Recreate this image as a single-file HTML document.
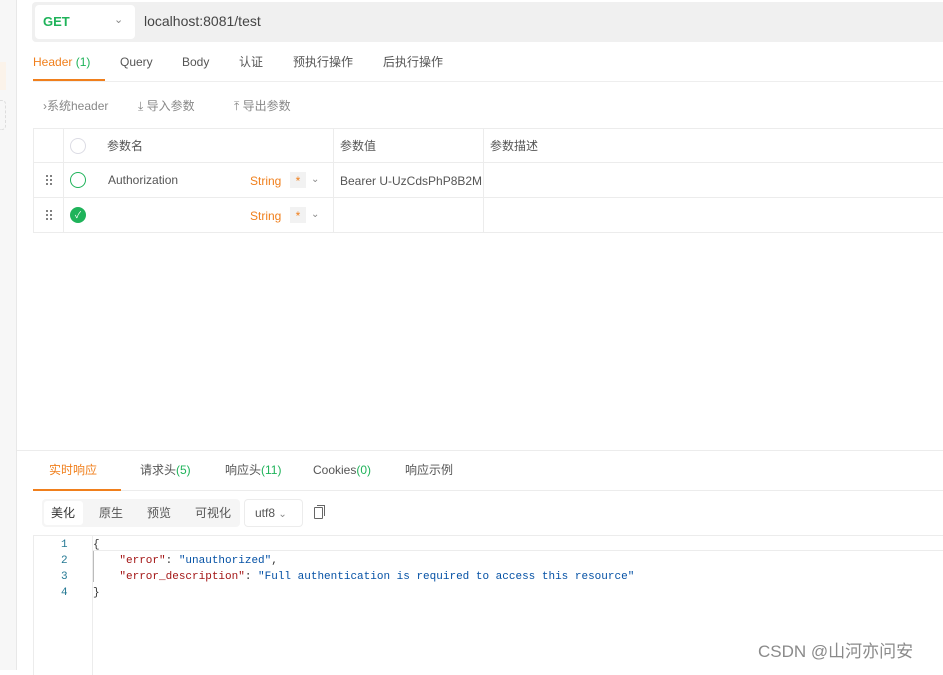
<!DOCTYPE html>
<html><head><meta charset="utf-8"><style>
*{box-sizing:border-box;margin:0;padding:0}
body{width:943px;height:670px;overflow:hidden;background:#fff;font-family:"Liberation Sans","Noto Sans CJK SC",sans-serif;font-size:12px;line-height:16px;color:#333;position:relative}
.abs{position:absolute}
.side{left:0;top:0;width:17px;height:670px;background:#f7f7f7;border-right:1px solid #e8e8e8}
.cn{white-space:nowrap}
.mono{font-family:"Liberation Mono","DejaVu Sans Mono",monospace;font-size:11px}
.dots{width:8px;height:12px;background-image:radial-gradient(circle,#777 1px,transparent 1.2px);background-size:4px 4px}
</style></head><body>
<div class="abs side"></div>
<div class="abs" style="left:0;top:62px;width:6px;height:28px;background:#fbf3ea"></div>
<div class="abs" style="left:0;top:100px;width:6px;height:30px;border:1px dashed #ddd;border-left:none;border-radius:0 4px 4px 0"></div>
<div class="abs" style="left:32px;top:2px;width:915px;height:40px;background:#f0f0f0;border-radius:4px"></div>
<div class="abs" style="left:35px;top:5px;width:100px;height:34px;background:#fff;border-radius:4px"></div>
<div class="abs" style="left:43px;top:14px;font-weight:bold;color:#1fb35a;font-size:13px">GET</div>
<div class="abs" style="left:114px;top:12px;color:#888;font-size:11px">&#8964;</div>
<div class="abs" style="left:144px;top:13px;color:#444;font-size:14px">localhost:8081/test</div>
<div class="abs cn" style="left:33px;top:54px;color:#f07f1c">Header <span style="color:#1fb35a">(1)</span></div>
<div class="abs cn" style="left:120px;top:54px;color:#555">Query</div>
<div class="abs cn" style="left:182px;top:54px;color:#555">Body</div>
<div class="abs cn" style="left:239px;top:54px;color:#555">认证</div>
<div class="abs cn" style="left:293px;top:54px;color:#555">预执行操作</div>
<div class="abs cn" style="left:383px;top:54px;color:#555">后执行操作</div>
<div class="abs" style="left:33px;top:81px;width:910px;height:1px;background:#eee"></div>
<div class="abs" style="left:33px;top:79px;width:72px;height:2px;background:#f07f1c"></div>
<div class="abs cn" style="left:43px;top:98px;color:#888">›系统header</div>
<div class="abs cn" style="left:138px;top:98px;color:#888">⤓ 导入参数</div>
<div class="abs cn" style="left:234px;top:98px;color:#888">⤒ 导出参数</div>
<div class="abs" style="left:33px;top:128px;width:912px;height:105px;border:1px solid #ececec"></div>
<div class="abs" style="left:33px;top:162px;width:912px;height:1px;background:#ececec"></div>
<div class="abs" style="left:33px;top:197px;width:912px;height:1px;background:#ececec"></div>
<div class="abs" style="left:63px;top:128px;width:1px;height:105px;background:#ececec"></div>
<div class="abs" style="left:333px;top:128px;width:1px;height:105px;background:#ececec"></div>
<div class="abs" style="left:483px;top:128px;width:1px;height:105px;background:#ececec"></div>
<div class="abs" style="left:70px;top:138px;width:16px;height:16px;border:1px solid #dcdce4;border-radius:50%"></div>
<div class="abs cn" style="left:107px;top:138px;color:#555">参数名</div>
<div class="abs cn" style="left:340px;top:138px;color:#555">参数值</div>
<div class="abs cn" style="left:490px;top:138px;color:#555">参数描述</div>
<div class="abs dots" style="left:45px;top:174px"></div>
<div class="abs" style="left:70px;top:172px;width:16px;height:16px;border:1px solid #1fb35a;border-radius:50%"></div>
<div class="abs cn" style="left:108px;top:172px;color:#555">Authorization</div>
<div class="abs cn" style="left:250px;top:173px;color:#f07f1c">String</div>
<div class="abs" style="left:290px;top:172px;width:16px;height:16px;background:#f2f2f2;color:#f07f1c;text-align:center;font-size:12px;line-height:18px">*</div>
<div class="abs" style="left:311px;top:172px;color:#888;font-size:10px">&#8964;</div>
<div class="abs cn" style="left:340px;top:173px;color:#555">Bearer U-UzCdsPhP8B2M</div>
<div class="abs dots" style="left:45px;top:209px"></div>
<div class="abs" style="left:70px;top:207px;width:16px;height:16px;background:#1fb35a;border-radius:50%;color:#fff;font-size:9px;text-align:center;line-height:16px">✓</div>
<div class="abs cn" style="left:250px;top:208px;color:#f07f1c">String</div>
<div class="abs" style="left:290px;top:207px;width:16px;height:16px;background:#f2f2f2;color:#f07f1c;text-align:center;font-size:12px;line-height:18px">*</div>
<div class="abs" style="left:311px;top:207px;color:#888;font-size:10px">&#8964;</div>
<div class="abs" style="left:17px;top:450px;width:926px;height:1px;background:#ececec"></div>
<div class="abs cn" style="left:49px;top:462px;color:#f07f1c">实时响应</div>
<div class="abs cn" style="left:140px;top:462px;color:#555">请求头<span style="color:#1fb35a">(5)</span></div>
<div class="abs cn" style="left:225px;top:462px;color:#555">响应头<span style="color:#1fb35a">(11)</span></div>
<div class="abs cn" style="left:313px;top:462px;color:#555">Cookies<span style="color:#1fb35a">(0)</span></div>
<div class="abs cn" style="left:405px;top:462px;color:#555">响应示例</div>
<div class="abs" style="left:33px;top:490px;width:910px;height:1px;background:#ececec"></div>
<div class="abs" style="left:33px;top:489px;width:88px;height:2px;background:#f07f1c"></div>
<div class="abs" style="left:42px;top:499px;width:198px;height:28px;background:#f5f5f5;border-radius:4px"></div>
<div class="abs" style="left:44px;top:501px;width:39px;height:24px;background:#fff;border-radius:3px"></div>
<div class="abs cn" style="left:51px;top:505px;color:#333">美化</div>
<div class="abs cn" style="left:99px;top:505px;color:#555">原生</div>
<div class="abs cn" style="left:147px;top:505px;color:#555">预览</div>
<div class="abs cn" style="left:195px;top:505px;color:#555">可视化</div>
<div class="abs" style="left:244px;top:499px;width:59px;height:28px;border:1px solid #ececec;border-radius:4px"></div>
<div class="abs cn" style="left:255px;top:505px;color:#555">utf8 <span style="font-size:10px;color:#888">&#8964;</span></div>
<div class="abs" style="left:314px;top:507px;width:9px;height:12px;border:1px solid #666;border-radius:1px"></div>
<div class="abs" style="left:317px;top:505px;width:8px;height:11px;border-top:1px solid #666;border-right:1px solid #666"></div>
<div class="abs" style="left:33px;top:535px;width:912px;height:140px;border-left:1px solid #ececec;border-top:1px solid #ececec"></div>
<div class="abs" style="left:92px;top:535px;width:1px;height:140px;background:#ececec"></div>
<div class="abs" style="left:92px;top:550px;width:851px;height:1px;background:#ececec"></div>
<div class="abs" style="left:93px;top:551px;width:1px;height:31px;background:#bbb"></div>
<div class="abs mono" style="left:61px;top:537px;color:#237893;line-height:16px">1<br>2<br>3<br>4</div>
<div class="abs mono" style="left:93px;top:537px;line-height:16px;white-space:pre;color:#333">{
    <span style="color:#a31515">"error"</span>: <span style="color:#0451a5">"unauthorized"</span>,
    <span style="color:#a31515">"error_description"</span>: <span style="color:#0451a5">"Full authentication is required to access this resource"</span>
}</div>
<div class="abs cn" style="left:758px;top:641px;color:#8a8a8a;font-size:17px;line-height:22px">CSDN @山河亦问安</div>
</body></html>
